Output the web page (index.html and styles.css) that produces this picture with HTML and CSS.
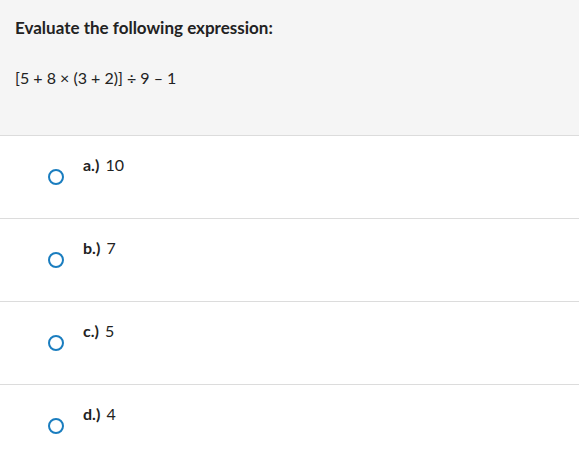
FILE: index.html
```html
<!DOCTYPE html>
<html>
<head>
<meta charset="utf-8">
<link rel="stylesheet" href="styles.css">
</head>
<body>
<div class="question">
  <div class="prompt">
    <p class="title">Evaluate the following expression:</p>
    <p class="expr">[5 + 8 × (3 + 2)] ÷ 9 – 1</p>
  </div>
  <ul class="choices">
    <li class="choice"><span class="radio"></span><span class="label"><b>a.)</b> 10</span></li>
    <li class="choice"><span class="radio"></span><span class="label"><b>b.)</b> 7</span></li>
    <li class="choice"><span class="radio"></span><span class="label"><b>c.)</b> 5</span></li>
    <li class="choice"><span class="radio"></span><span class="label"><b>d.)</b> 4</span></li>
  </ul>
</div>
</body>
</html>
```

FILE: styles.css
```css
html, body {
  margin: 0;
  padding: 0;
  background: #ffffff;
}
body {
  font-family: "Lato", "Open Sans", sans-serif;
  color: #222222;
  width: 579px;
  height: 461px;
  overflow: hidden;
}
.prompt {
  background: #f5f5f5;
  height: 136px;
  box-sizing: border-box;
  padding: 17px 15px 0 15px;
  border-bottom: 1px solid #dcdcdc;
}
.title {
  margin: 0;
  font-size: 17px;
  font-weight: 700;
  line-height: 22px;
}
.expr {
  margin: 28px 0 0 0;
  font-size: 16px;
  line-height: 22px;
}
.choices {
  list-style: none;
  margin: 0;
  padding: 0;
}
.choice {
  display: flex;
  align-items: flex-start;
  height: 83px;
  box-sizing: border-box;
  border-bottom: 1px solid #dcdcdc;
}
.radio {
  width: 16px;
  height: 16px;
  border: 2px solid #1a7dbf;
  border-radius: 50%;
  box-sizing: border-box;
  margin: 33px 0 0 48px;
  flex: none;
}
.label {
  margin: 18px 0 0 19px;
  font-size: 16px;
  line-height: 22px;
}
.label b {
  font-weight: 700;
  margin-right: 2px;
}
```
